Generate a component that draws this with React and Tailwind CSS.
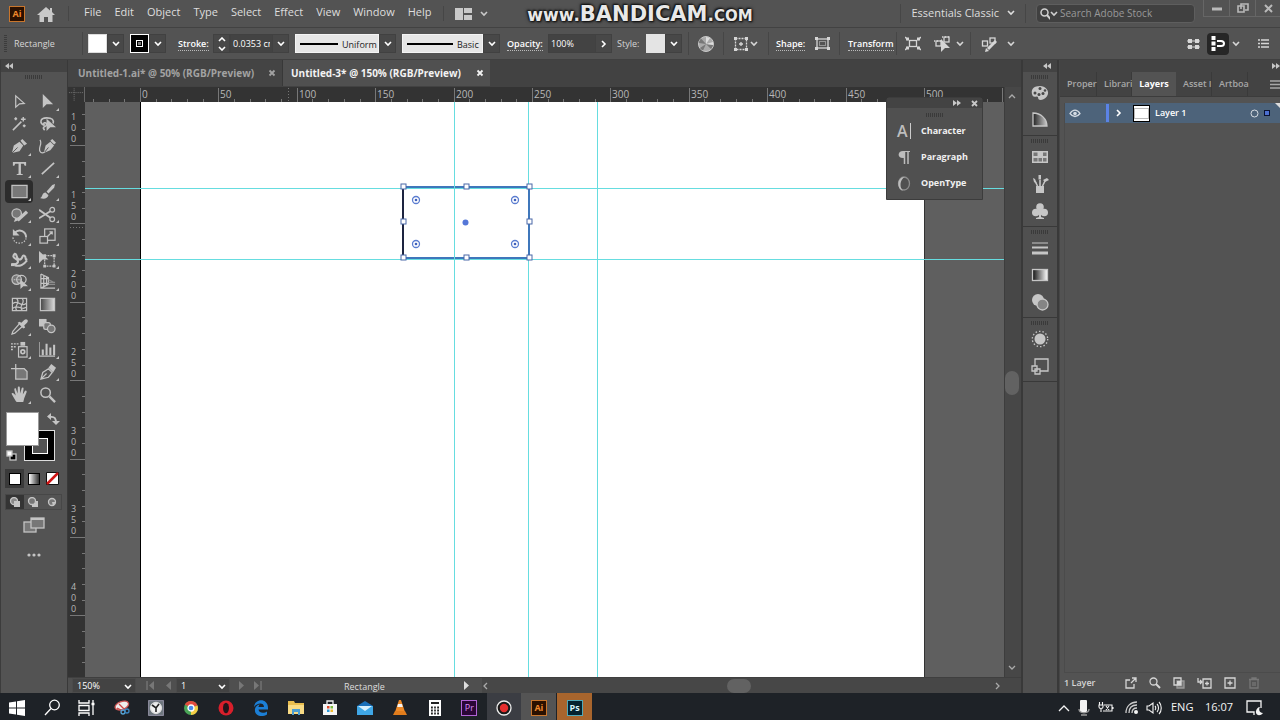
import React from "react";

const menus = ["File", "Edit", "Object", "Type", "Select", "Effect", "View", "Window", "Help"];

function Svg({ w = 18, h = w, box, children, className = "" }) {
  return (
    <svg
      width={w}
      height={h}
      viewBox={box || `0 0 ${w} ${h}`}
      fill="none"
      stroke="currentColor"
      strokeWidth="1.3"
      aria-hidden="true"
      className={"shrink-0 " + className}
    >
      {children}
    </svg>
  );
}

const Chevron = ({ className = "" }) => (
  <Svg w={8} h={6} className={className}>
    <path d="M1 1l3 3 3-3" strokeWidth="1.6" />
  </Svg>
);

const Double = ({ flip }) => (
  <Svg w={8} h={6}>
    {flip ? <path d="M0 0l4 3-4 3zM4 0l4 3-4 3z" fill="currentColor" stroke="none" /> : <path d="M4 0L0 3l4 3zM8 0L4 3l4 3z" fill="currentColor" stroke="none" />}
  </Svg>
);

const Grip = () => (
  <Svg w={18} h={4} className="text-[#3a3a3a]">
    <path d="M0 2h18" strokeWidth="4" strokeDasharray="1 1" />
  </Svg>
);

const Sep = ({ className = "" }) => <span className={"w-px shrink-0 self-stretch bg-[#464646] " + className} />;

const Drop = ({ label }) => (
  <button aria-label={label} className="flex h-[19px] w-[17px] shrink-0 items-center justify-center border border-[#414141] bg-[#484848] text-white">
    <Chevron />
  </button>
);

const F = { fill: "currentColor", stroke: "none" };

const tools = [
  ["Selection", <path d="M5 3v12l4-3.600L14 11z" />],
  ["Direct selection", <path {...F} d="M4 1v15l4-4h7z" />, 1],
  ["Magic wand", <path d="M2 16L11 7M13 2v5M10.500 4.500h5M5 2.500v3M3.500 4h3M14 10v3M12.500 11.500h3" strokeWidth="1.600" />],
  ["Lasso", <><path d="M6 11C0 9 1 3 8 3c6 0 8 2 7 6M6 11c-3-3 2-4 2-1 0 2-2 2-3 3s0 2 1 3" strokeWidth="1.700" /><path {...F} d="M8 4v13l4-4h6z" /></>],
  ["Pen", <><path {...F} d="M1 16l2-8 6-4 4 4-4 6z" /><path {...F} d="M10 3l2-2 5 5-3 2z" /><path d="M1 16l6-6" stroke="#535353" strokeWidth="1" /></>, 1],
  ["Curvature", <><path {...F} d="M5 16l2-8 5-4 4 4-4 5z" /><path {...F} d="M12 3l2-2 4 4-2 2z" /><path d="M1 2c3 4-2 8 0 12 1 2 3 2 5 1" /><path d="M6 15l4-5" stroke="#535353" strokeWidth="1" /></>],
  ["Type", <path {...F} d="M2 2h14v4h-1.500l-1-2h-3v10.500l2 .5v1H6v-1l2-.5V4H4.500l-1 2H2z" />, 1],
  ["Line segment", <path d="M3 15L16 3" strokeWidth="1.800" />, 1],
  ["Rectangle", <rect x="1" y="2.500" width="16" height="13" fill="#787878" />, 1],
  ["Paintbrush", <><path {...F} d="M8 9l6-7 3-1-1 4-6 6z" /><path {...F} d="M1 16c3-1 2-6 6-6l3 3c-1 4-5 4-9 3z" /></>, 1],
  ["Shaper", <><circle cx="6" cy="8" r="5" fill="#777" /><path d="M7 15l10-9" strokeWidth="3.500" /><path {...F} d="M3 17l2-5 3 3z" /></>, 1],
  ["Scissors", <><circle cx="14" cy="4" r="2.500" /><circle cx="14" cy="14" r="2.500" /><path d="M0 4l12 8.500M0 13L12 5.500" strokeWidth="2" /></>, 1],
  ["Rotate", <><path d="M4 5c5-5 12-1 12 5" strokeWidth="2" /><path {...F} d="M2 1v7h7z" /><path d="M2 10c1 8 12 8 14 1" strokeDasharray="1.500 1.500" /></>, 1],
  ["Scale", <><rect x="6" y="1" width="11" height="12" /><rect x="1" y="9" width="8" height="7" fill="#535353" /><path d="M9 9l5-5m-3 0h3v3" /></>, 1],
  ["Width", <><path d="M1 14c6 1 8-3 5-5s-5-3-2-6c3 0 1 6 5 6s2-5 5-4 0 6 3 3" strokeWidth="2.200" /><path d="M4 15c5 2 10-1 13-5" strokeWidth="2.200" /><rect {...F} x="0" y="13" width="4" height="3" /></>, 1],
  ["Free transform", <><rect x="6" y="5" width="10" height="11" strokeDasharray="2 1" /><path d="M4.500 5h3M14.500 5h3M4.500 16h3M14.500 16h3" strokeWidth="3" /><path {...F} d="M0 0v13l4-4h6z" /></>, 1],
  ["Shape builder", <><ellipse cx="6" cy="7" rx="5" ry="5" fill="#777" /><ellipse cx="11" cy="7" rx="5" ry="4.500" /><path d="M3 7h8" strokeDasharray="1 1" /><path {...F} d="M10 7v10l3-3h5z" /></>, 1],
  ["Perspective grid", <><path d="M2 1v15h15M2 1l8 4v7l-8 4M5 2v12M8 4v9M2 6h8M2 11h8" /><path d="M10 7l6 3M10 10h7M10 12h7" stroke="#8b8b8b" /></>, 1],
  ["Mesh", <><rect x="1.500" y="2.500" width="15" height="13" /><path d="M2 8c6-5 8 5 14 0M2 13c5-5 9 3 14-1M6 3c5 4-4 8 0 12M12 3c4 4-5 8 0 12" /></>],
  ["Gradient", <rect x="1.500" y="2.500" width="15" height="13" fill="url(#grayRamp)" />],
  ["Eyedropper", <><path {...F} d="M9 4l2 1 3-3c3-2 5 1 3 3l-3 3 1 2-2 1-6-6z" /><path d="M9 6l-7 8-1 3 3-1 8-7" /></>, 1],
  ["Blend", <><path {...F} d="M0 1h8v8H0z" /><rect x="5" y="5" width="7" height="7" rx="2" fill="#777" /><circle cx="13" cy="11.500" r="4" fill="#777" /></>],
  ["Symbol sprayer", <><path d="M0 3h2M3 3h2M6 3h2M0 6h2M3 6h2M0 9h2" strokeWidth="1.500" /><rect x="8" y="6" width="9" height="11" /><rect {...F} x="10" y="1" width="5" height="4" /><circle cx="12.500" cy="11.500" r="2" strokeWidth="1.800" /></>, 1],
  ["Column graph", <><path d="M0 1v15h17" /><path d="M4 15V9M8 15V3M12 15V7M16 15V4" strokeWidth="2.200" /></>, 1],
  ["Artboard", <><path d="M5 5h9l3 3v8H5z" fill="#777" /><path d="M5 0v5M0 5h6" /></>],
  ["Slice", <><path d="M2 16L4 9l6-4 4 4-4 5zM2 16l6-6" /><path {...F} d="M10 4l3-4 5 4-3 5z" /></>, 1],
  ["Hand", <path {...F} d="M5 16L1 9c-1-2 1-2 2-1l2 2L3.500 4c0-2 2-2 2 0L7 8l.2-6c0-2 2.200-2 2.200 0L9.800 8l1.500-5.500c.6-1.600 2.200-1 2 .5L12.500 9l2-3.500c1-1.500 2.500-.5 2 1L14 13l-1 4H6z" />, 1],
  ["Zoom", <><circle cx="7" cy="7" r="5" strokeWidth="1.600" /><path d="M11 11l6 6" strokeWidth="2.500" /></>],
];

function Header() {
  return (
    <header className="relative flex h-[27px] shrink-0 items-center bg-[#535353] text-[#dedede]">
      <span className="ml-[9px] flex h-4 w-4 items-center justify-center border border-[#c8762d] bg-[#2a1000] text-[9px] font-bold text-[#f08a2c]">Ai</span>
      <button aria-label="Home" className="ml-3 text-[#c9c9c9]">
        <Svg w={18} h={16}><path {...F} d="M9 1L0 9h2.500v7H7v-5h4v5h4.500V9H18l-3-3V2h-2v2.500z" /></Svg>
      </button>
      <Sep className="my-1.5 ml-[13px] mr-[15px]" />
      <nav className="flex gap-[13px] pb-1 text-[11px]/5">
        {menus.map((m) => <button key={m}>{m}</button>)}
      </nav>
      <Sep className="my-1.5 ml-[11px] mr-[11px]" />
      <button aria-label="Arrange documents" className="flex items-center gap-2 text-[#c9c9c9]">
        <Svg w={17} h={12}><path {...F} d="M0 0h8v12H0zM9 0h8v5H9zM9 7h8v5H9z" /></Svg>
        <Chevron />
      </button>
      <div className="absolute left-1/2 top-0 flex h-7 -translate-x-1/2 items-baseline font-['DejaVu_Sans',sans-serif] font-bold text-[#e8e8e8] [text-shadow:0_0_2px_#111,1px_1px_2px_#111,-1px_-1px_2px_#111,0_0_4px_#222]">
        <span className="text-[17px]/7">www.</span>
        <span className="text-[21px]/7">BANDICAM</span>
        <span className="text-[17px]/7">.</span>
        <span className="text-[15px]/7">COM</span>
      </div>
      <div className="ml-auto flex h-full items-center">
        <Sep className="my-1" />
        <button className="ml-2.5 flex items-center gap-2 pb-0.5 text-[11px]/5">
          <span className="whitespace-nowrap">Essentials Classic</span>
          <Chevron />
        </button>
        <Sep className="my-1 ml-2.5" />
        <label className="ml-2.5 flex h-[19px] w-[159px] items-center rounded-sm border border-[#5e5e5e] bg-[#404040] pl-[3px] text-[#d0d0d0]">
          <Svg w={10} h={12}><circle cx="4.500" cy="4.500" r="3.500" strokeWidth="1.500" /><path d="M7 7l3.500 4" strokeWidth="2" /></Svg>
          <Chevron />
          <input aria-label="Search Adobe Stock" placeholder="Search Adobe Stock" className="ml-0.5 w-0 min-w-0 flex-1 bg-transparent text-[10px] outline-none placeholder:text-[#999]" />
        </label>
        <div className="ml-2 flex h-[17px] self-start border-b border-l border-[#666] text-[#b9b9b9]">
          <button aria-label="Minimize" className="flex w-[26px] items-center justify-center border-r border-[#666]"><Svg w={10} h={8}><path d="M0 5h10" strokeWidth="3" /></Svg></button>
          <button aria-label="Restore" className="flex w-[26px] items-center justify-center border-r border-[#666]"><Svg w={12} h={10}><path d="M4 6V1h7v6H8" strokeWidth="1.600" /><path d="M1 3h6v6H1z" strokeWidth="1.600" /></Svg></button>
          <button aria-label="Close" className="flex w-6 items-center justify-center"><Svg w={9} h={9}><path d="M1 1l7 7M8 1L1 8" strokeWidth="2" /></Svg></button>
        </div>
      </div>
    </header>
  );
}

const Dotted = ({ children, className = "" }) => (
  <button className={"shrink-0 whitespace-nowrap text-left " + className}>
    <span className="border-b border-dotted border-[#bbb] font-semibold text-white">{children}</span>
  </button>
);

const Handles = ({ pts }) => pts.map(([x, y]) => <rect key={x + "-" + y} {...F} x={x - 1.5} y={y - 1.5} width="3" height="3" />);

function ControlBar() {
  return (
    <div className="flex h-8 shrink-0 items-center border-t border-[#424242] bg-[#535353] text-[9px]/3 text-[#d6d6d6]">
      <Svg w={3} h={18} className="ml-1 text-[#3c3c3c]"><path d="M1.500 0v18" strokeWidth="3" strokeDasharray="1 1" /></Svg>
      <span className="ml-[7px] w-[68px] shrink-0 whitespace-nowrap font-medium">Rectangle</span>
      <Sep className="my-1" />
      <button aria-label="Fill" className="ml-[5px] h-[19px] w-[19px] shrink-0 border border-[#ddd] bg-white" />
      <Drop label="Fill options" />
      <button aria-label="Stroke colour" className="ml-1.5 flex h-[19px] w-[19px] shrink-0 items-center justify-center border border-white bg-black">
        <span className="flex h-[7px] w-[7px] items-center justify-center border border-white"><span className="h-[3px] w-[3px] bg-[#777]" /></span>
      </button>
      <Drop label="Stroke options" />
      <Dotted className="ml-3 w-[35px]">Stroke:</Dotted>
      <button aria-label="Step stroke weight" className="flex h-[19px] w-[17px] shrink-0 items-center justify-center border border-[#414141] bg-[#484848] text-white">
        <Svg w={8} h={14}><path d="M1 4l3-3 3 3M1 10l3 3 3-3" strokeWidth="1.600" /></Svg>
      </button>
      <input aria-label="Stroke weight" defaultValue="0.0353 cm" className="h-[19px] w-[42px] shrink-0 border border-r-0 border-[#414141] bg-[#434343] pl-0.5 pr-0.5 text-[9px] font-medium text-white outline-none" />
      <Drop label="Stroke weight presets" />
      <button className="ml-1.5 flex h-[19px] w-[84px] shrink-0 items-center gap-1 border border-[#f4f4f4] bg-[#e6e6e6] pl-1 pt-0.5 font-medium text-[#222]">
        <span className="mb-0.5 h-0.5 w-[38px] bg-black" />Uniform
      </button>
      <Drop label="Width profile" />
      <button className="ml-1.5 flex h-[19px] w-[81px] shrink-0 items-center gap-1 border border-[#f4f4f4] bg-[#e6e6e6] pl-1 pt-0.5 font-medium text-[#222]">
        <span className="mb-0.5 h-0.5 w-[46px] bg-black" />Basic
      </button>
      <Drop label="Brush definition" />
      <Dotted className="ml-[7px] w-[41px]">Opacity:</Dotted>
      <input aria-label="Opacity" defaultValue="100%" className="h-[19px] w-12 shrink-0 border border-[#414141] bg-[#434343] pl-0.5 text-[9px] font-medium text-white outline-none" />
      <button aria-label="Opacity slider" className="flex h-[19px] w-4 shrink-0 items-center justify-center border border-l-0 border-[#414141] bg-[#484848] text-white"><Svg w={6} h={8}><path d="M1 1l3 3-3 3" strokeWidth="1.600" /></Svg></button>
      <span className="ml-[5px] w-[29px] shrink-0 font-medium">Style:</span>
      <button aria-label="Graphic style" className="h-[19px] w-[19px] shrink-0 bg-[#e4e4e4]" />
      <Drop label="Graphic style options" />
      <Sep className="my-1 ml-1.5" />
      <button aria-label="Recolor artwork" className="ml-[9px] shrink-0">
        <Svg w={16}><circle cx="8" cy="8" r="7.500" fill="#aaa" stroke="#c9c9c9" strokeWidth="1" /><path d="M8 8L3 2.500A7 7 0 0 0 1 7zM8 8l5 5a7 7 0 0 0 2-4zM8 8l-6 4a7 7 0 0 0 3 2.500z" fill="#777" stroke="none" /><path d="M8 8V1l4 1zM8 8l7-2V9z" fill="#ddd" stroke="none" /></Svg>
      </button>
      <Sep className="my-1 ml-[9px]" />
      <button aria-label="Align" className="ml-2.5 flex shrink-0 items-center gap-0.5">
        <Svg w={14}><rect x="1.500" y="1.500" width="11" height="11" strokeDasharray="2 1" /><path d="M7 5v4M5 7h4" /><Handles pts={[[1.5, 1.5], [12.5, 1.5], [1.5, 12.5], [12.5, 12.5]]} /></Svg>
        <Chevron />
      </button>
      <Sep className="my-1 ml-2.5" />
      <Dotted className="ml-[7px] w-[39px]">Shape:</Dotted>
      <button aria-label="Shape properties" className="shrink-0"><Svg w={15} h={13}><rect x="2" y="2" width="11" height="9" /><rect x="4.500" y="4.500" width="6" height="4" strokeDasharray="1 1" strokeWidth="1" /><Handles pts={[[1.5, 1.5], [13.5, 1.5], [1.5, 11.5], [13.5, 11.5]]} /></Svg></button>
      <Sep className="my-1 ml-[9px]" />
      <Dotted className="ml-2 w-12">Transform</Dotted>
      <Sep className="my-1" />
      <button aria-label="Isolate selected object" className="ml-2 shrink-0"><Svg w={16} h={15}><rect x="4.500" y="4.500" width="7" height="6" /><path d="M0 1l3 3M16 1l-3 3M0 14l3-3M16 14l-3-3" /><Handles pts={[[2.5, 3], [13.5, 3], [2.5, 12], [13.5, 12]]} /></Svg></button>
      <button aria-label="Select similar" className="ml-[13px] flex shrink-0 items-center gap-1"><Svg w={18} h={17} box="0 0 18 17"><rect x="2" y="6" width="5" height="5" /><rect x="10" y="2" width="5" height="5" /><path d="M0 6h9M8 2h9" strokeDasharray="1 2" /><path {...F} d="M7 4v13l4-4h5z" /></Svg><Chevron /></button>
      <Sep className="my-1 ml-1.5" />
      <button aria-label="Edit similar shapes" className="ml-2.5 flex shrink-0 items-center gap-2.5"><Svg w={16} h={16}><rect x="1.500" y="5" width="5" height="5" /><rect x="9" y="2" width="5" height="5" /><path d="M15 5l-8 8" strokeWidth="3" /><path {...F} d="M4 16l1-4 3 3z" /></Svg><Chevron /></button>
      <div className="ml-auto flex items-center pr-[11px]">
        <button aria-label="Grid view" className="mr-[7px]"><Svg w={13} h={12}><path {...F} d="M1 1h4v4H1zM8 1h4v4H8zM1 7h4v4H1zM8 7h4v4H8z" /><path d="M0 3h13M0 9h13" strokeWidth="1" /></Svg></button>
        <button aria-label="Snap" className="flex h-[22px] w-[22px] items-center justify-center rounded-sm bg-[#262626] text-white"><Svg w={16} h={15}><path d="M3.500 0v15" strokeWidth="4" strokeDasharray="4 1.500" /><path d="M7 5h4c4 0 4 5 0 5H7" strokeWidth="2" /></Svg></button>
        <button aria-label="Snap options" className="ml-[3px] mr-[18px]"><Chevron /></button>
        <button aria-label="Panel menu"><Svg w={11} h={9}><path d="M0 1h2M3 1h8M0 4.500h2M3 4.500h8M0 8h2M3 8h8" /></Svg></button>
      </div>
    </div>
  );
}

function Toolbar() {
  return (
    <aside className="flex w-[67px] shrink-0 flex-col border-l border-[#3c3c3c] bg-[#535353] text-[#c4c4c4]">
      <div className="flex h-3 items-center bg-[#434343] pl-1"><Double /></div>
      <div className="flex h-[18px] items-start justify-center pt-[3px]"><Grip /></div>
      <div className="ml-1 grid h-[316px] w-14 shrink-0 grid-cols-2 grid-rows-14">
        {tools.map(([name, art, more]) => (
          <button
            key={name}
            aria-label={name + " tool"}
            className={"relative flex items-center justify-center " + (name === "Rectangle" ? "rounded-sm bg-[#2c2c2c]" : "")}
          >
            <Svg w={17} box="0 0 18 18">{art}</Svg>
            {more && <Svg w={3} className="absolute bottom-0.5 right-0.5"><path {...F} d="M3 0v3H0z" /></Svg>}
          </button>
        ))}
      </div>
      <div className="flex h-[63px] shrink-0 pl-[5px] pt-1.5">
        <Svg w={54} h={54}>
          <rect x="18.500" y="18.500" width="30" height="30" fill="#000" stroke="#ddd" strokeWidth="1" />
          <rect x="26.500" y="26.500" width="15" height="15" fill="#535353" stroke="#fff" strokeWidth="1" />
          <rect x=".5" y=".5" width="32" height="33" fill="#fff" stroke="#999" strokeWidth="1" />
          <path d="M44 5c5-1 6 2 6 6" strokeWidth="1.800" /><path {...F} d="M45 1v7l-4-3.500zM46 9h8l-4 4z" />
          <rect x="4" y="42" width="6" height="6" fill="#000" /><rect x="1" y="39" width="5" height="5" fill="#fff" />
        </Svg>
      </div>
      <div className="ml-1 flex h-[19px] w-[57px] shrink-0">
        <button aria-label="Color" className="flex flex-1 items-center justify-center bg-[#3a3a3a]"><span className="h-3 w-3 border border-black bg-white" /></button>
        <button aria-label="Gradient" className="flex flex-1 items-center justify-center"><span className="h-3 w-3 border border-black bg-linear-to-r from-white to-[#333]" /></button>
        <button aria-label="None" className="flex flex-1 items-center justify-center"><Svg w={13}><path d="M.5.5h12v12H.5z" fill="#fff" stroke="#111" strokeWidth="1" /><path d="M1 12L12 1" stroke="#d01515" strokeWidth="2.500" /></Svg></button>
      </div>
      <div className="ml-1 mt-1.5 flex h-4 w-[57px] shrink-0 border border-[#474747]">
        <button aria-label="Draw normal" className="flex flex-1 items-center justify-center bg-[#343434]"><Svg w={12} h={10}><circle cx="5" cy="4" r="3.500" fill="#888" /><rect {...F} x="5" y="4" width="6" height="6" /></Svg></button>
        <button aria-label="Draw behind" className="flex flex-1 items-center justify-center"><Svg w={12} h={10}><rect {...F} x="5" y="4" width="6" height="6" /><circle cx="5" cy="4" r="3.500" fill="#777" /></Svg></button>
        <button aria-label="Draw inside" className="flex flex-1 items-center justify-center"><Svg w={10}><circle cx="5" cy="5" r="3.500" fill="#777" /><path {...F} d="M5 5h4L6 9z" /></Svg></button>
      </div>
      <button aria-label="Change screen mode" className="mt-[7px] self-center"><Svg w={22} h={16}><rect x="1" y="5" width="12" height="10" fill="#777" /><rect x="8" y="1" width="13" height="10" fill="#777" /><path d="M8 2h13" strokeWidth="2" /></Svg></button>
      <button aria-label="Edit toolbar" className="mt-5 self-center"><Svg w={14} h={4}><circle {...F} cx="2" cy="2" r="1.600" /><circle {...F} cx="7" cy="2" r="1.600" /><circle {...F} cx="12" cy="2" r="1.600" /></Svg></button>
    </aside>
  );
}

const STEP = 78.4;
const majors = Array.from({ length: 12 }, (_, i) => i);
const minors = Array.from({ length: 60 }, (_, i) => i);

function TopRuler() {
  return (
    <svg className="h-[15px] w-full bg-[#333] text-[#b8b8b8]" stroke="#777" fill="none">
      {minors.map((i) => <path key={i} d={`M${Math.round(55 + (i - 3) * (STEP / 5)) + 0.5} 12v3`} />)}
      {majors.map((i) => (
        <g key={i}>
          <path d={`M${Math.round(55 + i * STEP) + 0.5} 1v14`} />
          {i < 11 && <text x={Math.round(57 + i * STEP)} y="11" className="fill-current stroke-none text-[10px]">{i * 50}</text>}
        </g>
      ))}
      <path d="M203.500 1v14" strokeDasharray="1 2" />
    </svg>
  );
}

function SideRuler() {
  return (
    <svg className="h-full w-[17px] shrink-0 bg-[#333] text-[#b8b8b8]" stroke="#777" fill="none">
      {minors.map((i) => <path key={i} d={`M14 ${Math.round(43 + (i - 2) * (STEP / 5)) + 0.5}h3`} />)}
      {majors.slice(0, 8).map((i) => (
        <g key={i}>
          <path d={`M2 ${Math.round(43 + i * STEP) + 0.5}h15`} />
          {i < 7 && String(100 + i * 50).split("").map((c, k) => (
            <text key={k} x="3" y={Math.round(18 + i * STEP) + k * 11} className="fill-current stroke-none text-[9px]">{c}</text>
          ))}
        </g>
      ))}
      <path d="M2 125.500h15" strokeDasharray="1 2" />
    </svg>
  );
}

const handles = [[318, 84], [381, 84], [444, 84], [318, 119], [444, 119], [318, 155], [381, 155], [444, 155]];
const corners = [[331, 98], [430, 98], [331, 142], [430, 142]];

function Canvas() {
  return (
    <svg className="h-full min-w-0 flex-1 bg-[#5f5f5f]" fill="none">
      <rect x="56" y="-2" width="784" height="900" fill="#fff" />
      <path d="M55.500 0v900" stroke="#000" />
      <path d="M839.500 0v900" stroke="#333" />
      <path d="M0 86.500h2000M0 157.500h2000M369.500 0v900M443.500 0v900M512.500 0v900" stroke="#66dde0" />
      <path d="M318 85v70" stroke="#1d2440" strokeWidth="2" />
      <path d="M318 85h126v71H318" stroke="#3f77bb" strokeWidth="2" />
      <path d="M369.500 84v73" stroke="#66dde0" />
      {handles.map(([x, y]) => <rect key={x + "," + y} x={x - 2} y={y - 2} width="5" height="5" fill="#fff" stroke="#4b68a8" />)}
      {corners.map(([x, y]) => (
        <g key={x + "," + y} stroke="#5b7dd0">
          <circle cx={x} cy={y} r="3.500" strokeWidth="1.300" />
          <circle cx={x} cy={y} r="1.300" fill="#3f60bb" stroke="none" />
        </g>
      ))}
      <circle cx="380.500" cy="120.500" r="3" fill="#5577d8" />
    </svg>
  );
}

function TypePanel() {
  return (
    <section aria-label="Type panels" className="absolute right-[38px] top-[37px] w-[97px] rounded-t border border-[#3c3c3c] bg-[#505050] pb-[3px] text-[9px] font-bold text-[#f0f0f0]">
      <div className="flex h-2.5 items-center justify-end gap-2.5 bg-[#434343] pr-1 text-[#c8c8c8]">
        <button aria-label="Expand"><Double flip /></button>
        <button aria-label="Close panel"><Svg w={7}><path d="M1 1l5 5M6 1L1 6" strokeWidth="1.800" /></Svg></button>
      </div>
      <div className="flex h-[10px] items-center justify-center pt-1"><Grip /></div>
      {[["A", "Character"], ["¶", "Paragraph"], ["O", "OpenType"]].map(([g, t]) => (
        <button key={t} className="flex h-[26px] w-full items-center pl-2.5">
          <span className="flex w-6 text-[#bdbdbd]">
            {g === "A" && <span className="border-r border-[#ccc] pr-0.5 text-[16px]/4 font-semibold">A</span>}
            {g === "¶" && <Svg w={14} h={15}><path {...F} d="M6 1h7v1H6z" /><path {...F} d="M7 1v7C0 9 0 1 6 1z" /><path d="M7.500 1v13M11 1v13" strokeWidth="1.500" /></Svg>}
            {g === "O" && <Svg w={14} h={15}><ellipse cx="7" cy="7.500" rx="5.500" ry="6.500" stroke="#8c8c8c" /><path {...F} d="M8 1C-1 1 0 14 6 14.500 2 12 3 3 8 1z" /></Svg>}
          </span>
          {t}
        </button>
      ))}
    </section>
  );
}

const StatusSelect = ({ label, value, className }) => (
  <span className={"relative flex h-[15px] shrink-0 " + className}>
    <select aria-label={label} defaultValue={value} className="w-full appearance-none border border-[#4b4b4b] bg-[#434343] pl-1 pt-px text-[9px]/3 font-medium text-white outline-none">
      <option>{value}</option>
    </select>
    <Chevron className="pointer-events-none absolute right-1 top-1.5 text-white" />
  </span>
);

const PlayArrow = ({ flip, bar }) => (
  <Svg w={9} h={9} className={flip ? "rotate-180" : ""}>
    <path {...F} d="M1 0l5 4.500L1 9z" />
    {bar && <path d="M8 0v9" />}
  </Svg>
);

const CloseX = () => <Svg w={8}><path d="M1.500 1.500l5 5M6.500 1.500l-5 5" strokeWidth="1.800" /></Svg>;

function Document() {
  return (
    <main className="relative flex min-w-0 flex-1 flex-col border-l border-[#393939] bg-[#424242]">
      <div role="tablist" className="flex h-[27px] shrink-0 pb-px text-[10px] font-bold">
        <div className="flex w-[215px] items-center border-r border-[#383838] bg-[#444] pl-2.5 text-[#a2a2a2]">
          <button role="tab" className="w-[190px] whitespace-nowrap text-left">Untitled-1.ai* @ 50% (RGB/Preview)</button>
          <button aria-label="Close Untitled-1.ai"><CloseX /></button>
        </div>
        <div className="flex w-[207px] items-center bg-[#505050] pl-2 text-[#f3f3f3]">
          <button role="tab" aria-selected="true" className="w-[185px] whitespace-nowrap text-left">Untitled-3* @ 150% (RGB/Preview)</button>
          <button aria-label="Close Untitled-3"><CloseX /></button>
        </div>
      </div>
      <div className="flex min-h-0 flex-1">
        <div className="flex min-w-0 flex-1 flex-col">
          <div className="flex h-[15px] shrink-0 bg-[#333]">
            <Svg w={17} h={15} className="border-r border-[#666] text-[#777]"><path d="M6.500 1v14M1 5.500h15" strokeDasharray="1 1" strokeWidth="1" /></Svg>
            <TopRuler />
          </div>
          <div className="flex min-h-0 flex-1"><SideRuler /><Canvas /></div>
        </div>
        <div className="flex w-[17px] shrink-0 flex-col items-center border-l border-[#3d3d3d] bg-[#474747] py-1.5 pr-0.5 text-[#aaa]">
          <button aria-label="Scroll up"><Svg w={8} h={6} className="block"><path d="M1 5l3-3 3 3" /></Svg></button>
          <span className="mt-[272px] h-6 w-3.5 rounded-full bg-[#626262]" />
          <button aria-label="Scroll down" className="mt-auto"><Svg w={8} h={6} className="block"><path d="M1 1l3 3 3-3" /></Svg></button>
        </div>
      </div>
      <div className="flex h-4 shrink-0 items-center border-t border-[#3f3f3f] bg-[#4f4f4f] pl-1 text-[9px] font-medium text-[#ddd]">
        <StatusSelect label="Zoom level" value="150%" className="w-[64px]" />
        <span className="flex w-10 items-center gap-2 pl-2.5 text-[#777]"><PlayArrow flip bar /><PlayArrow flip /></span>
        <StatusSelect label="Artboard" value="1" className="w-[54px]" />
        <span className="flex w-[42px] items-center gap-1.5 pl-2 text-[#777]"><PlayArrow /><PlayArrow bar /></span>
        <span className="w-[181px] whitespace-nowrap pl-[72px] pt-0.5">Rectangle</span>
        <button aria-label="Status options" className="px-2.5"><PlayArrow /></button>
        <div className="flex h-full flex-1 items-center bg-[#474747] pr-5 text-[#aaa]">
          <button aria-label="Scroll left"><Svg w={6} h={8}><path d="M5 1L2 4l3 3" /></Svg></button>
          <span className="ml-[46%] h-3.5 w-6 rounded-full bg-[#626262]" />
          <button aria-label="Scroll right" className="ml-auto"><Svg w={6} h={8}><path d="M1 1l3 3-3 3" /></Svg></button>
        </div>
      </div>
      <TypePanel />
    </main>
  );
}

const dock = [
  [
    ["Color", <><path {...F} d="M9 2c-7 0-9 4-8 8 1 5 5 1 6 3 0 3 2 4 6 2 6-3 6-12-4-13z" /><g fill="#484848" stroke="none"><circle cx="4" cy="9" r="1.500" /><circle cx="8" cy="10.500" r="1.500" /><circle cx="12" cy="9.500" r="1.500" /><circle cx="14" cy="6.500" r="1.300" /><circle cx="9" cy="4.500" r="1.500" /></g></>],
    ["Color guide", <path d="M2 2v13h14C16 8 10 2 2 2z" fill="url(#darkRamp)" />],
  ],
  [
    ["Swatches", <><path {...F} d="M1 3h16v12H1z" /><path d="M2.500 4.500h4v3.500h-4zM12 4.500h3.500v3.500H12zM2.500 10h4v3.500h-4zM7.500 10h3.500v3.500H7.500zM12 10h3.500v3.500H12z" fill="#777" stroke="none" /></>],
    ["Brushes", <><path {...F} d="M5 11h8v7H5z" /><path d="M6.500 11L4 6M9 11V5M11.500 11L14 6" strokeWidth="1.600" /><path {...F} d="M2 3l2 1 2 5-3-2zM7.500 0h2.500v4.500H7.500zM12 5l4-2 2 2-4 2z" /></>],
    ["Symbols", <><g {...F}><circle cx="9" cy="5" r="3.800" /><circle cx="4.800" cy="10.500" r="3.800" /><circle cx="13.200" cy="10.500" r="3.800" /><path d="M8 8h2v7l3 1v1H5v-1l3-1z" /></g></>],
  ],
  [
    ["Stroke", <><path d="M1 4h16" strokeWidth="1" /><path d="M1 8.500h16" strokeWidth="2" /><path d="M1 14h16" strokeWidth="3" /></>],
    ["Gradient panel", <rect x="1.500" y="3.500" width="15" height="11" fill="url(#blackWhite)" />],
    ["Transparency", <><circle {...F} cx="7" cy="7" r="6" /><circle cx="11.500" cy="11.500" r="5.500" fill="#858585" /></>],
  ],
  [
    ["Appearance", <><circle {...F} cx="9" cy="9" r="5.500" /><circle cx="9" cy="9" r="7.700" strokeDasharray="1.500 2" /></>],
    ["Asset export", <><path d="M4 9V2h13v12H9" /><path d="M1 9h5v5H1zM4 12h5v5H4z" fill="#535353" /></>],
  ],
];

function Dock() {
  return (
    <aside className="flex w-[38px] shrink-0 flex-col border-x-2 border-[#393939] bg-[#505050] text-[#c6c6c6]">
      <div className="flex h-3 items-center justify-end bg-[#434343] pr-1.5"><Double /></div>
      {dock.map((group, i) => (
        <div key={i} className="flex flex-col items-center border-b border-[#393939] pb-0.5 pt-0.5">
          <div className="flex h-[5px] items-center"><Grip /></div>
          {group.map(([name, art]) => (
            <button key={name} aria-label={name} className="flex h-[27px] w-full items-center justify-center">
              <Svg w={18}>{art}</Svg>
            </button>
          ))}
        </div>
      ))}
    </aside>
  );
}

function LayersPanel() {
  const tab = "shrink-0 whitespace-nowrap border-r border-[#3a3a3a] pl-[7px] text-left ";
  return (
    <aside className="flex w-[221px] shrink-0 flex-col border-l border-[#464646] bg-[#535353] text-[9px] font-semibold">
      <div className="flex h-3 items-center justify-end bg-[#434343] text-[#c6c6c6]"><Double flip /></div>
      <div role="tablist" className="flex h-[25px] shrink-0 items-stretch border-b border-[#3c3c3c] bg-[#434343] text-[#a8a8a8]">
        <button role="tab" aria-label="Properties" className={tab + "w-[37px]"}>Proper</button>
        <button role="tab" aria-label="Libraries" className={tab + "w-[35px]"}>Librari</button>
        <button role="tab" aria-selected="true" className="w-[44px] shrink-0 bg-[#535353] text-center font-bold text-white">Layers</button>
        <button role="tab" aria-label="Asset Export" className={tab + "w-9"}>Asset I</button>
        <button role="tab" aria-label="Artboards" className={tab + "w-9"}>Artboa</button>
        <button aria-label="Layers menu" className="ml-auto"><Svg w={11} h={9}><path d="M1 1h10M1 4.500h10M1 8h10" /></Svg></button>
      </div>
      <div className="ml-1 mt-1.5 flex-1 border-b border-l border-[#4b4b4b]">
        <div className="flex h-5 items-center bg-[#4d637a] pl-1 text-white">
          <button aria-label="Toggle visibility" className="text-[#d5dbe2]"><Svg w={12} h={9}><path d="M1 4.500c3-4.500 7-4.500 10 0-3 4-7 4-10 0z" /><circle {...F} cx="6" cy="4.500" r="1.800" /></Svg></button>
          <span className="ml-[25px] h-[18px] w-[3px] bg-[#5b83e6]" />
          <button aria-label="Expand layer" className="ml-[7px]"><Svg w={6} h={8}><path d="M1 1l3 3-3 3" strokeWidth="1.600" /></Svg></button>
          <span className="ml-[11px] flex h-[17px] w-[17px] items-center justify-center border border-black bg-white"><span className="h-[11px] w-full border border-[#bbb]" /></span>
          <button className="ml-[5px] whitespace-nowrap">Layer 1</button>
          <button aria-label="Target layer" className="ml-auto mr-[5px] text-[#d5dbe2]"><Svg w={9}><circle cx="4.500" cy="4.500" r="3.500" strokeWidth="1" /></Svg></button>
          <span className="mr-[5px] h-1.5 w-1.5 border border-[#0b1230] bg-[#4c6fd0]" />
          <Svg w={5} className="self-start"><path d="M0 0h5v5z" fill="#ddd" stroke="none" /></Svg>
        </div>
      </div>
      <div className="flex h-5 shrink-0 items-center pl-1 text-[#d5d5d5]">
        <span className="w-[61px]">1 Layer</span>
        <div className="flex items-center gap-3">
          <button aria-label="Collect for export"><Svg w={12}><path d="M5 3H1v8h8V7M7 1h4v4M11 1L6 6" /></Svg></button>
          <button aria-label="Locate object"><Svg w={12}><circle cx="4.500" cy="4.500" r="3.500" /><path d="M7 7l4 4" strokeWidth="2" /></Svg></button>
          <button aria-label="Make clipping mask"><Svg w={12}><path d="M4 4h7v7H4z" fill="#777" stroke="#999" /><path d="M1 1h7v7H1z" /><path {...F} d="M4 4h4v4H4z" /></Svg></button>
          <button aria-label="New sublayer"><Svg w={15} h={12}><path d="M1 1v4h4M3 3l2 2-2 2" /><path d="M6 2h8v9H6zM8 6.500h4M10 4.500v4" /></Svg></button>
          <button aria-label="New layer"><Svg w={12}><path d="M1 1h10v10H1zM3.500 6h5M6 3.500v5" /></Svg></button>
          <button aria-label="Delete layer" disabled className="text-[#777]"><Svg w={12}><path d="M1 2.500h10M4 2V1h4v1M2 3v8h8V3M5 5v4M7 5v4" /></Svg></button>
        </div>
      </div>
    </aside>
  );
}

const AdobeTile = ({ t, className }) => <span className={"flex h-4 w-4 items-center justify-center border text-[9px]/3 font-bold " + className}>{t}</span>;

const tasks = [
  ["Start", <Svg w={16} className="text-white"><path {...F} d="M0 2.500L7 1.500v6H0zM8 1.300L16 0v7.500H8zM0 8.500h7v6L0 13.500zM8 8.500h8V16l-8-1.300z" /></Svg>],
  ["Search", <Svg w={17} className="text-white"><circle cx="10.500" cy="6" r="4.800" /><path d="M7 9.500l-6 6.500" /></Svg>],
  ["Task view", <Svg w={17} className="text-white"><path d="M1 1v3h10V1M1 6.500h10v5H1zM1 17v-3h10v3" /><path d="M15 1v15" /><path d="M13.500 5h3" strokeWidth="2.500" /></Svg>],
  ["Snip", <Svg w={16}><ellipse cx="8" cy="5.500" rx="7" ry="4" fill="#eee" stroke="#c55" transform="rotate(-20 8 6)" /><path d="M3 8l6 3M5 4l6 6" stroke="#c44" /><circle cx="9" cy="12" r="2" stroke="#58a6d8" /><circle cx="13" cy="11" r="2" stroke="#3b86c0" /></Svg>],
  ["Clock", <Svg w={16}><rect x=".5" y=".5" width="15" height="15" rx="1" fill="#6c757c" stroke="#889" /><circle cx="8" cy="8" r="5.500" fill="#f1f1f1" stroke="#ddd" /><path d="M4 5l4 3 3-4M8 8v4" stroke="#222" strokeWidth="1.600" /></Svg>],
  ["Chrome", <Svg w={14}><circle cx="7" cy="7" r="7" fill="#4aa657" stroke="none" /><path d="M7 7L.9 3.500A7 7 0 0 1 13.500 4.500z" fill="#e24b3d" stroke="none" /><path d="M7 7l6.500-2.500A7 7 0 0 1 7 14z" fill="#f4cd45" stroke="none" /><circle cx="7" cy="7" r="3" fill="#4b8bea" stroke="#fff" /></Svg>],
  ["Opera", <Svg w={16}><circle cx="8" cy="8" r="7.500" fill="#d81f2b" stroke="none" /><ellipse cx="8" cy="8" rx="3" ry="5.200" fill="#22151a" stroke="none" /></Svg>],
  ["Edge", <Svg w={16}><path d="M1 7C2-2 15-2 15 8v1.500H5.500c.5 4 6 4 8.500 2v3C8 18 1 15 2 9c.5-3 3-4.500 5-4.500-1 .8-1.500 1.500-1.500 2.500H11C11 2 4 2.500 1 7z" fill="#1c7fd6" stroke="none" /></Svg>],
  ["Explorer", <Svg w={16} h={15}><path d="M0 1h6l1 2h9v11H0z" fill="#e8bd4e" stroke="none" /><path d="M0 5h16v9H0z" fill="#f8db85" stroke="none" /><path d="M4 15V9h8v6h-2v-3H6v3z" fill="#4c9ed2" stroke="none" /></Svg>],
  ["Store", <Svg w={16}><path d="M5 4V1h6v3" stroke="#eee" /><path d="M1 4h14v11H1z" fill="#f5f5f5" stroke="none" /><path d="M5 6h2.500v2.500H5z" fill="#e04a2b" stroke="none" /><path d="M8.500 6H11v2.500H8.500z" fill="#79b83d" stroke="none" /><path d="M5 9.500h2.500V12H5z" fill="#2b98d8" stroke="none" /><path d="M8.500 9.500H11V12H8.500z" fill="#f0b92e" stroke="none" /></Svg>],
  ["Mail", <Svg w={16} h={14}><path d="M0 5l8-5 8 5v9H0z" fill="#1b6fb8" stroke="none" /><path d="M0 5h16v9H0z" fill="#3fa7e6" stroke="none" /><path d="M1 5h14L8 10z" fill="#d9f0fc" stroke="none" /></Svg>],
  ["VLC", <Svg w={14} h={16}><path d="M6 0h2l4 12H2z" fill="#ee8a28" stroke="none" /><path d="M5 4h4l.8 3H4.200z" fill="#f4f4f4" stroke="none" /><path d="M2 11h10l2 4H0z" fill="#e07c1c" stroke="none" /></Svg>],
  ["Calculator", <Svg w={12} h={16}><path d="M0 0h12v16H0z" fill="#fff" stroke="none" /><path d="M2 3h8M2 7.500h8M2 10.500h8M2 13.500h8" stroke="#222" strokeWidth="1.800" /><path d="M4.500 6v9M7.500 6v9" stroke="#fff" /></Svg>],
  ["Premiere", <AdobeTile t="Pr" className="border-[#b163d6] bg-[#2a0636] font-normal text-[#d98bf5]" />],
  ["Bandicam", <Svg w={16}><circle cx="8" cy="8" r="7" fill="#1a1a1a" stroke="#eee" /><circle cx="8" cy="8" r="4.200" fill="#e62e2e" stroke="none" /></Svg>, "bg-[#3b3d43]"],
  ["Illustrator", <AdobeTile t="Ai" className="border-[#c8762d] bg-[#2a1000] text-[#f08a2c]" />, "bg-[#545454]"],
  ["Photoshop", <AdobeTile t="Ps" className="border-[#4fa9b9] bg-[#04222e] text-[#d8f5fb]" />, "border-l border-[#1e2227] bg-[#a8652d]"],
];

function Taskbar() {
  return (
    <footer className="flex h-[27px] shrink-0 items-center bg-[#1e2227] text-[12px] text-[#f4f4f4]">
      <div className="flex h-full w-[592px] shrink-0">
        {tasks.map(([name, art, bg]) => (
          <button key={name} aria-label={name} className={"flex flex-1 items-center justify-center pt-0.5 " + (bg || "")}>{art}</button>
        ))}
      </div>
      <div className="ml-auto flex items-center pr-[17px] pt-0.5">
        <button aria-label="Hidden icons" className="mr-2"><Svg w={12} h={8}><path d="M1 7l5-5 5 5" /></Svg></button>
        <button aria-label="Microphone" className="mr-2"><Svg w={12} h={16}><rect {...F} x="2" y="0" width="7" height="12" rx="1" /><path d="M1 9c0 5 10 5 10 0M3 15h6" stroke="#999" /></Svg></button>
        <button aria-label="Battery" className="mr-[11px]"><Svg w={16} h={11}><path d="M6 3h8v6H5M15 5v2M8 4l3 4M11 4L8 8" strokeWidth="1.100" /><path d="M1.500 0v3M4.500 0v3M1 3h4v2c0 2-4 2-4 0zM3 6v4" strokeWidth="1.100" /></Svg></button>
        <button aria-label="Network" className="mr-2"><Svg w={13}><path d="M1 12C1 5 6 1 12 1M4 12c0-5 3-8 8-8M7 12c0-3 2-5 5-5" stroke="#ccc" /><circle {...F} cx="11" cy="11" r="2" /></Svg></button>
        <button aria-label="Volume" className="mr-[9px]"><Svg w={16} h={14}><path d="M1 5h2l4-3v10L3 9H1zM9 5c1 1 1 3 0 4M11 3c2 2 2 6 0 8M13 1c3 3 3 9 0 12" strokeWidth="1.100" /></Svg></button>
        <button className="w-[34px] text-left text-[11px]">ENG</button>
        <button className="w-[41px] text-left text-[11px]">16:07</button>
        <button aria-label="Notifications"><Svg w={17} h={16}><path d="M8 12H1V1h14v7M4 12h4v3" /><path d="M14 7c-2 3 0 6 3 6-3 4-8 2-7-2 .5-2 2-4 4-4z" {...F} /></Svg></button>
      </div>
    </footer>
  );
}

export default function App() {
  return (
    <div className="flex h-screen flex-col overflow-hidden bg-[#535353] font-['Open_Sans','Noto_Sans',sans-serif]">
      <svg width="0" height="0" className="absolute" aria-hidden="true">
        <defs>
          <linearGradient id="grayRamp"><stop stopColor="#444" /><stop offset="1" stopColor="#ddd" /></linearGradient>
          <linearGradient id="darkRamp"><stop stopColor="#222" /><stop offset="1" stopColor="#ccc" /></linearGradient>
          <linearGradient id="blackWhite"><stop stopColor="#111" /><stop offset="1" stopColor="#fff" /></linearGradient>
        </defs>
      </svg>
      <Header />
      <ControlBar />
      <div className="flex min-h-0 flex-1 border-t border-[#404040]">
        <Toolbar />
        <Document />
        <Dock />
        <LayersPanel />
      </div>
      <Taskbar />
    </div>
  );
}
